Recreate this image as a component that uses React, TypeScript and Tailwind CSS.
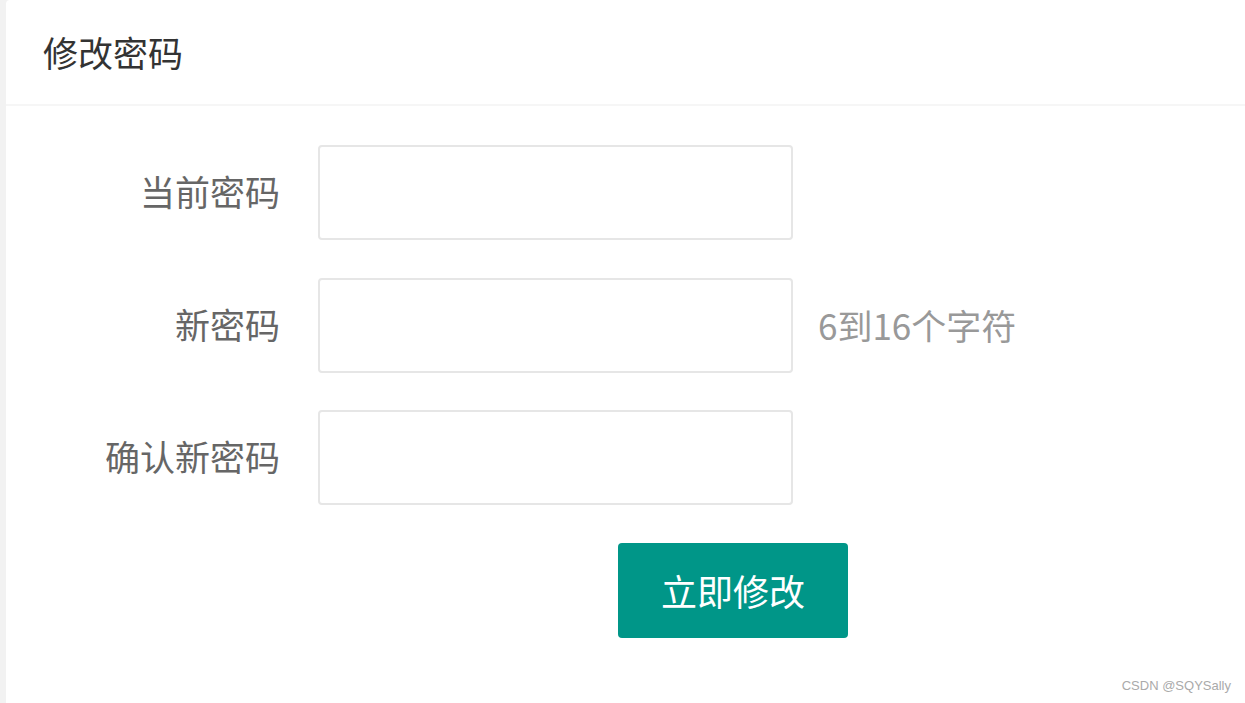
export default function App() {
  const rows = [
    { label: "当前密码", hint: "" },
    { label: "新密码", hint: "6到16个字符" },
    { label: "确认新密码", hint: "" },
  ];

  return (
    <div
      className="min-h-[703px] h-[703px] bg-[#f2f2f2] pl-[6px] overflow-hidden"
      style={{ fontFamily: '"Noto Sans CJK SC", "Noto Sans", sans-serif' }}
    >
      <div className="relative h-full bg-white rounded-tl-[4px]">
        {/* Header */}
        <div className="h-[106px] border-b-2 border-[#f6f6f6] flex items-center pl-[37px]">
          <h1 className="text-[35px] leading-none text-[#333] pb-[2px]">修改密码</h1>
        </div>

        {/* Form */}
        <div className="pt-[39px] flex flex-col gap-[37.5px]">
          {rows.map((row) => (
            <div key={row.label} className="flex items-center">
              <label className="w-[312px] pr-[38px] pb-[4px] text-right text-[35px] leading-none text-[#666]">
                {row.label}
              </label>
              <input
                type="password"
                className="w-[475px] h-[95px] border-2 border-[#e6e6e6] rounded-[4px] px-4 text-[35px] outline-none"
              />
              {row.hint && (
                <span className="ml-[25px] pb-[2px] text-[35px] leading-none text-[#999]">{row.hint}</span>
              )}
            </div>
          ))}
          <div className="flex">
            <button className="ml-[612px] w-[230px] h-[95px] bg-[#009688] rounded-[4px] text-white text-[36px] leading-none">
              立即修改
            </button>
          </div>
        </div>

        <span
          className="absolute right-[14px] bottom-[8px] text-[13px] text-[#aaa]"
          style={{ fontFamily: '"Liberation Sans", Arial, sans-serif' }}
        >
          CSDN @SQYSally
        </span>
      </div>
    </div>
  );
}
